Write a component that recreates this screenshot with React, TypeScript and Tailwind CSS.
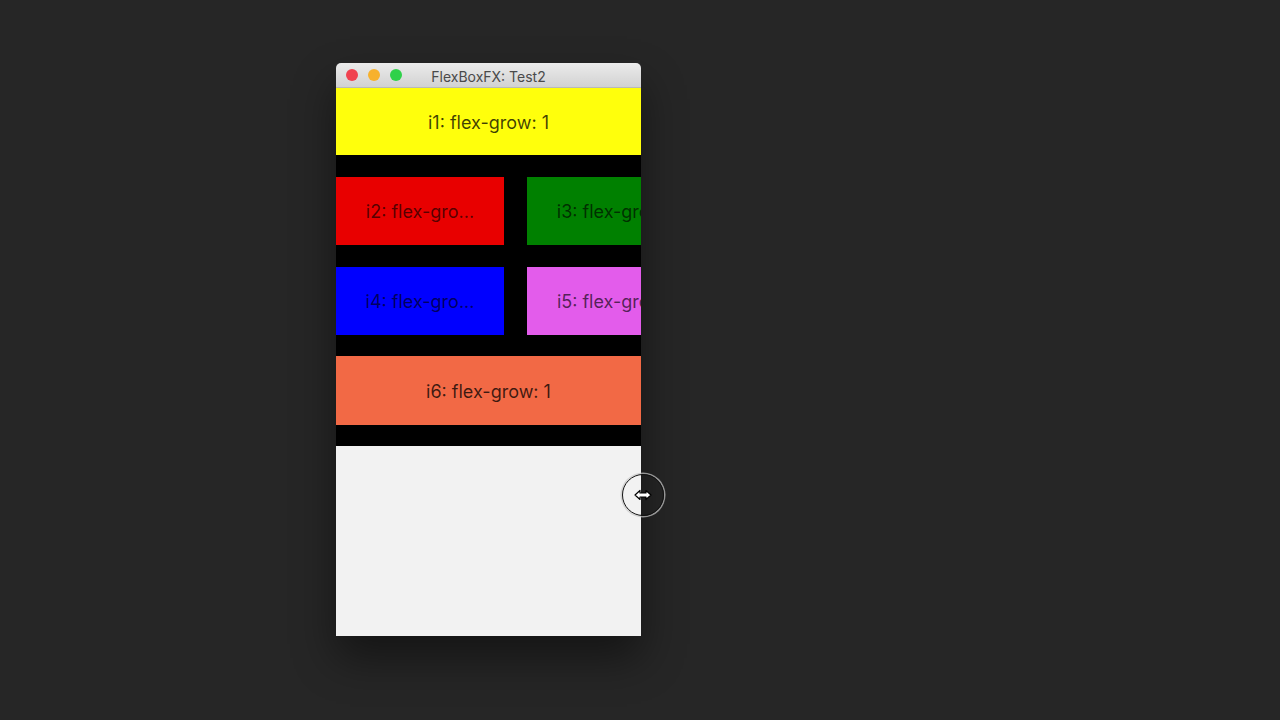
import React from "react";

const font = { fontFamily: "Inter, 'Noto Sans', sans-serif" };

function Box({ color, label, w }: { color: string; label: string; w?: string }) {
  return (
    <div
      className={`h-[68px] flex items-center justify-center shrink-0 text-[18px] text-black/65 whitespace-nowrap ${color} ${w ?? "w-full"}`}
    >
      {label}
    </div>
  );
}

export default function App() {
  return (
    <div className="w-[1280px] h-[720px] bg-[#262626] relative overflow-hidden" style={font}>
      <div className="absolute left-[336px] top-[63px] w-[305px] flex flex-col shadow-[0_22px_40px_rgba(0,0,0,0.45)]">
        <div className="h-[25px] rounded-t-[5px] bg-gradient-to-b from-[#ebebeb] to-[#d2d2d2] flex items-center relative border-b border-[#b9b9b9]">
          <div className="flex gap-[10px] pl-[10px]">
            <span className="w-[12px] h-[12px] rounded-full bg-[#f0424f]" />
            <span className="w-[12px] h-[12px] rounded-full bg-[#f7b12d]" />
            <span className="w-[12px] h-[12px] rounded-full bg-[#2fd14a]" />
          </div>
          <div className="absolute inset-0 flex items-center justify-center pt-[2px] text-[14px] text-[#4a4a4a]">
            FlexBoxFX: Test2
          </div>
        </div>
        <div className="bg-black flex flex-col overflow-hidden pb-[21px]">
          <div className="h-[67px] bg-[#ffff0c] flex items-center justify-center pt-[2px] text-[18px] text-black/75">
            i1: flex-grow: 1
          </div>
          <div className="flex gap-[23px] mt-[22px]">
            <Box color="bg-[#e80000]" label="i2: flex-gro..." w="w-[168px]" />
            <Box color="bg-[#008000]" label="i3: flex-gro..." w="w-[168px]" />
          </div>
          <div className="flex gap-[23px] mt-[22px]">
            <Box color="bg-[#0000ff]" label="i4: flex-gro..." w="w-[168px]" />
            <Box color="bg-[#e35ceb]" label="i5: flex-gro..." w="w-[168px]" />
          </div>
          <div className="h-[69px] mt-[21px] bg-[#f26945] flex items-center justify-center pt-[1px] text-[18px] text-black/75">
            i6: flex-grow: 1
          </div>
        </div>
        <div className="h-[190px] bg-[#f2f2f2]" />
      </div>
      <div className="absolute left-[622px] top-[474px] w-[42px] h-[42px] rounded-full border-[1.5px] border-[#111] shadow-[0_0_0_1.5px_rgba(200,200,200,0.7)] flex items-center justify-center">
        <svg width="18" height="12" viewBox="0 0 18 12">
          <path d="M1 6 L6 1.5 V4 H12 V1.5 L17 6 L12 10.5 V8 H6 V10.5 Z" fill="#fff" stroke="#000" strokeWidth="1.2" strokeLinejoin="round" />
        </svg>
      </div>
    </div>
  );
}
